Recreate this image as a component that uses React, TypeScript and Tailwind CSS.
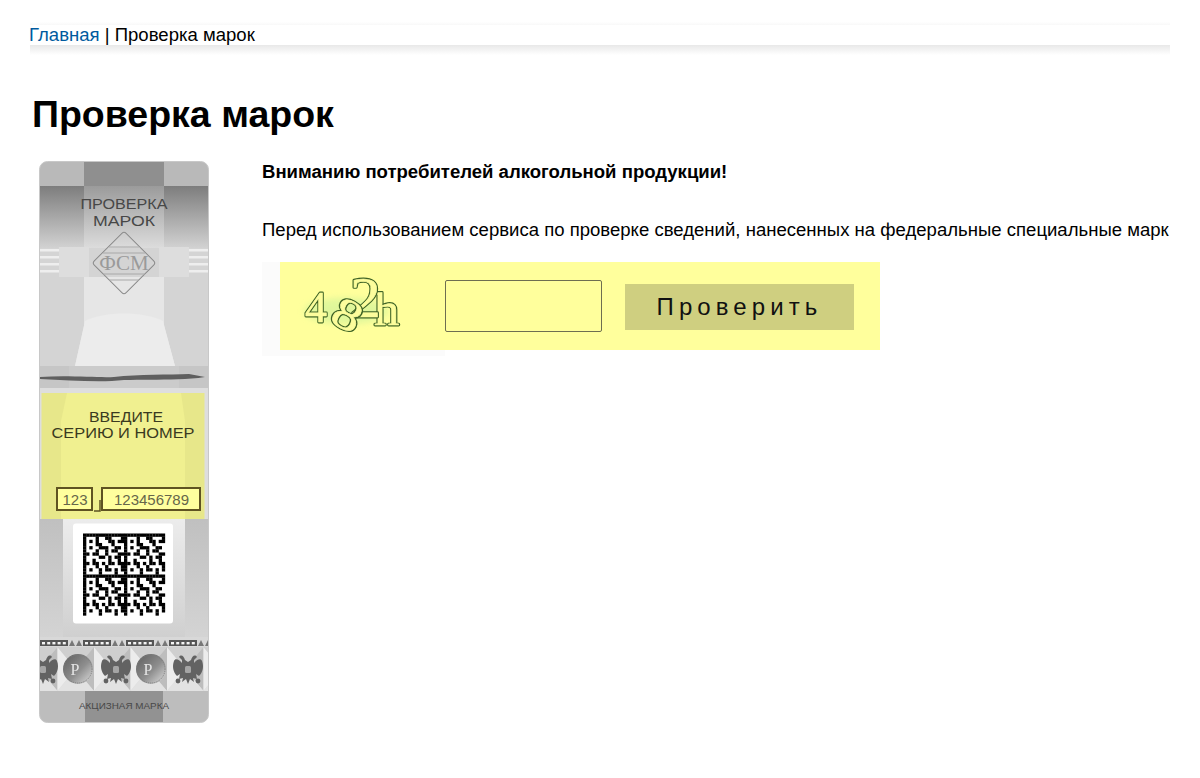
const SANS = '"Liberation Sans", Arial, sans-serif';

const quadrant = [
  "1111111111111",
  "1000100110001",
  "1010100011011",
  "1000110001000",
  "1010011100110",
  "1000100101100",
  "1101100100011",
  "1000011010110",
  "1001000010010",
  "1101101011011",
  "1000100100001",
  "1010010110101",
  "1000010000100",
];

function DataMatrix() {
  const c = 41 / 13;
  const cells: { x: number; y: number }[] = [];
  [0, 41].forEach((ox) =>
    [0, 41].forEach((oy) =>
      quadrant.forEach((row, r) =>
        row.split("").forEach((v, k) => {
          if (v === "1") cells.push({ x: 44 + ox + k * c, y: 372 + oy + r * c });
        })
      )
    )
  );
  return (
    <g>
      <rect x="34" y="362" width="100" height="100" rx="3" fill="#fff" />
      {cells.map((p, i) => (
        <rect key={i} x={p.x} y={p.y} width={c + 0.15} height={c + 0.15} fill="#000" />
      ))}
    </g>
  );
}

function Eagle({ cx }: { cx: number }) {
  return (
    <g transform={`translate(${cx} 508)`} fill="#626262">
      <path d="M-3 -9 C-4 -13 -7 -15 -9 -12 L-6 -9 L-6 -6 C-9 -10 -13 -11 -14 -8 C-16 -3 -15 3 -11 7 L-8 5 L-9 10 L-5 9 L-6 13 L-2 10 L0 15 L2 10 L6 13 L5 9 L9 10 L8 5 L11 7 C15 3 16 -3 14 -8 C13 -11 9 -10 6 -6 L6 -9 L9 -12 C7 -15 4 -13 3 -9 L0 -7 Z" />
      <rect x="-3" y="-3" width="6" height="7" rx="1.5" fill="#a5a5a5" />
      <circle cx="-10" cy="12" r="2.4" />
      <circle cx="10" cy="12" r="2.4" />
    </g>
  );
}

function Coin({ cx }: { cx: number }) {
  return (
    <g>
      <circle cx={cx} cy="508" r="15" fill="url(#coin)" />
      <circle cx={cx} cy="508" r="14" fill="none" stroke="#7c7c7c" strokeDasharray="1 1" strokeWidth="1" />
      <text x={cx - 3} y="514" textAnchor="middle" fontSize="16" fontFamily='"Liberation Serif", serif' fill="#e6e6e6">
        Р
      </text>
    </g>
  );
}

function Stamp() {
  const tiles = [-18, 18.5, 55, 91.5, 128, 164.5];
  const groups = [1, 44, 87, 130];
  return (
    <svg width="170" height="562" viewBox="0 0 170 562" className="block">
      <defs>
        <clipPath id="card">
          <rect x="0.5" y="0.5" width="169" height="561" rx="8" />
        </clipPath>
        <linearGradient id="sideTop" x1="0" x2="0" y1="0" y2="1">
          <stop offset="0" stopColor="#7d7d7d" />
          <stop offset="1" stopColor="#d2d2d2" />
        </linearGradient>
        <linearGradient id="midTop" x1="0" x2="0" y1="0" y2="1">
          <stop offset="0" stopColor="#9b9b9b" />
          <stop offset="1" stopColor="#dcdcdc" />
        </linearGradient>
        <linearGradient id="lowMid" x1="0" x2="0" y1="0" y2="1">
          <stop offset="0" stopColor="#ececec" />
          <stop offset="1" stopColor="#cfcfcf" />
        </linearGradient>
        <linearGradient id="lowSide" x1="0" x2="0" y1="0" y2="1">
          <stop offset="0" stopColor="#c0c0c0" />
          <stop offset="1" stopColor="#d4d4d4" />
        </linearGradient>
        <linearGradient id="coin" x1="0" x2="1" y1="0" y2="1">
          <stop offset="0" stopColor="#5c5c5c" />
          <stop offset="0.55" stopColor="#8e8e8e" />
          <stop offset="1" stopColor="#e2e2e2" />
        </linearGradient>
        <filter id="soft" x="-5%" y="-5%" width="110%" height="110%">
          <feGaussianBlur stdDeviation="0.5" />
        </filter>
        <filter id="softer" x="-5%" y="-5%" width="110%" height="110%">
          <feGaussianBlur stdDeviation="0.7" />
        </filter>
      </defs>
      <g clipPath="url(#card)">
        <g filter="url(#soft)">
          <rect width="170" height="562" fill="#d2d2d2" />
          <rect width="170" height="25" fill="#b9b9b9" />
          <rect x="45" width="80" height="25" fill="#8f8f8f" />
          <rect y="25" width="170" height="62" fill="url(#sideTop)" />
          <rect x="45" y="25" width="80" height="62" fill="url(#midTop)" />
          <rect y="87" width="170" height="120" fill="#d4d4d4" />
          <rect x="20" y="86" width="30" height="30" fill="#dddddd" />
          <rect x="120" y="86" width="30" height="30" fill="#dddddd" />
          {[88, 95, 102, 109].map((y) => (
            <g key={y}>
              <rect x="0" y={y} width="20" height="2.5" fill="#eeeeee" />
              <rect x="150" y={y} width="20" height="2.5" fill="#eeeeee" />
            </g>
          ))}
          <path d="M45 116 L125 116 L125 165 L136 205 L36 205 L45 165 Z" fill="#e6e6e6" />
          <path d="M46 160 C65 150 105 150 124 160 L136 205 L36 205 Z" fill="#ececec" />
          <rect y="205" width="170" height="22" fill="#c6c6c6" />
          <rect x="30" y="205" width="110" height="22" fill="#cbcbcb" />
          <path d="M1 216 C30 214 60 217 75 216 C100 213 130 214 150 213 L166 216 C140 220 110 218 85 219 C60 222 30 219 1 218 Z" fill="#5f5f5f" />
          <rect y="227" width="170" height="131" fill="#dedede" />

          <rect x="2.5" y="232" width="163" height="126" fill="#e7e78a" />
          <path d="M28 232 L142 232 L146 260 L146 358 L22 358 L22 260 Z" fill="#f0f090" />

          <rect y="358" width="170" height="120" fill="url(#lowSide)" />
          <rect x="24" y="358" width="122" height="120" fill="url(#lowMid)" />

          <rect y="478" width="170" height="52" fill="#dcdcdc" />
          {tiles.map((x) => (
            <g key={x}>
              <path d={`M${x} 486 L${x + 18} 508 L${x} 530 Z`} fill="#ececec" />
              <path d={`M${x} 486 L${x + 36.5} 486 L${x + 18} 508 Z`} fill="#cfcfcf" />
              <path d={`M${x + 36.5} 486 L${x + 36.5} 530 L${x + 18} 508 Z`} fill="#bdbdbd" />
              <path d={`M${x} 530 L${x + 36.5} 530 L${x + 18} 508 Z`} fill="#e2e2e2" />
            </g>
          ))}
          <rect y="476" width="170" height="10" fill="#d8d8d8" />
          {groups.map((x) => (
            <g key={x}>
              <rect x={x} y="479" width="28" height="6" fill="#555" />
              {[0, 1, 2, 3, 4].map((i) => (
                <rect key={i} x={x + 2 + i * 5.2} y="481" width="3" height="2.4" fill="#f4f4f4" />
              ))}
              <path d={`M${x + 29} 485 L${x + 32} 479 L${x + 35} 485 Z M${x + 36} 485 L${x + 39} 479 L${x + 42} 485 Z`} fill="#777" />
            </g>
          ))}
          <Eagle cx={4} />
          <Coin cx={39} />
          <Eagle cx={77} />
          <Coin cx={112} />
          <Eagle cx={149} />
          <rect y="530" width="170" height="32" fill="#bdbdbd" />
          <rect x="46" y="530" width="78" height="32" fill="#929292" />
        </g>
        <g filter="url(#softer)" transform="translate(0 0.5)">
          <DataMatrix />
        </g>

        <text x="85" y="47.5" textAnchor="middle" fontSize="14.8" fontFamily={SANS} fill="#474747" textLength="87" lengthAdjust="spacingAndGlyphs">
          ПРОВЕРКА
        </text>
        <text x="85" y="65" textAnchor="middle" fontSize="14.8" fontFamily={SANS} fill="#474747" textLength="62" lengthAdjust="spacingAndGlyphs">
          МАРОК
        </text>
        <g fill="none" stroke="#8a8a8a" strokeWidth="1" filter="url(#soft)">
          <rect x="62.5" y="79.5" width="45" height="45" rx="3" transform="rotate(45 85 102)" />
          <path d="M70 86 L100 86 M64 92 L106 92 M64 113 L106 113 M70 119 L100 119" stroke="#a8a8a8" />
        </g>
        <text x="85" y="109" textAnchor="middle" fontSize="21" fontFamily='"Liberation Serif", serif' fill="#9a9a9a">
          ФСМ
        </text>

        <text x="87" y="261" textAnchor="middle" fontSize="14.8" fontFamily={SANS} fill="#3a3a20" textLength="74" lengthAdjust="spacingAndGlyphs">
          ВВЕДИТЕ
        </text>
        <text x="84" y="277" textAnchor="middle" fontSize="14.8" fontFamily={SANS} fill="#3a3a20" textLength="143" lengthAdjust="spacingAndGlyphs">
          СЕРИЮ И НОМЕР
        </text>
        <g filter="url(#soft)">
          <rect x="18" y="327" width="35" height="22" fill="#ffff9e" stroke="#5e5220" strokeWidth="2" />
          <rect x="63" y="327" width="98" height="22" fill="#ffff9e" stroke="#5e5220" strokeWidth="2" />
          <path d="M55 350 L61 350 L61 339" fill="none" stroke="#5e5220" strokeWidth="1.5" />
        </g>
        <text x="36" y="343.5" textAnchor="middle" fontSize="15" fontFamily={SANS} fill="#66664a">
          123
        </text>
        <text x="112.5" y="343.5" textAnchor="middle" fontSize="15" fontFamily={SANS} fill="#66664a">
          123456789
        </text>
        <text x="85" y="548" textAnchor="middle" fontSize="9.5" fontFamily={SANS} fill="#484848" textLength="90" lengthAdjust="spacingAndGlyphs">
          АКЦИЗНАЯ МАРКА
        </text>
      </g>
      <rect x="0.5" y="0.5" width="169" height="561" rx="8" fill="none" stroke="#c8c8c8" />
    </svg>
  );
}

function Glyph({ ch, x, y, size, r = 0, sx = 1 }: { ch: string; x: number; y: number; size: number; r?: number; sx?: number }) {
  const props = {
    x: 0,
    y: 0,
    fontSize: size,
    fontFamily: '"Liberation Serif", serif',
  };
  return (
    <g transform={`translate(${x} ${y}) rotate(${r}) scale(${sx} 1)`}>
      <text {...props} fill="none" stroke="#3f6425" strokeWidth="2.8" strokeLinejoin="round">
        {ch}
      </text>
      <text {...props} fill="#fcfd9c" stroke="#fcfd9c" strokeWidth="0.6">
        {ch}
      </text>
    </g>
  );
}

function Captcha() {
  return (
    <svg width="120" height="88" viewBox="0 -9 120 88" className="shrink-0 block">
      <defs>
        <filter id="glow" x="-20%" y="-20%" width="140%" height="140%">
          <feGaussianBlur stdDeviation="3" />
        </filter>
        <filter id="inkSoft" x="-5%" y="-5%" width="110%" height="110%">
          <feGaussianBlur stdDeviation="0.3" />
        </filter>
      </defs>
      <ellipse cx="50" cy="40" rx="42" ry="13" fill="#d8f59a" filter="url(#glow)" opacity="0.8" />
      <g filter="url(#inkSoft)">
        <Glyph ch="4" x={9} y={51} size={44} />
        <Glyph ch="h" x={78} y={54} size={46} sx={1.1} />
        <Glyph ch="2" x={54} y={46} size={56} sx={1.1} />
        <Glyph ch="8" x={32} y={50} size={44} r={28} sx={1.3} />
      </g>
    </svg>
  );
}

export default function App() {
  return (
    <div className="min-h-[778px] bg-white text-black" style={{ fontFamily: SANS }}>
      <div className="px-[30px] pt-[22px]">
        <div className="h-[3px] bg-gradient-to-b from-white to-[#f8f8f8]" />
        <div className="-ml-[1px] h-[20px] text-[18.56px] leading-[20px] whitespace-nowrap">
          <a href="#" className="text-[#005a9e]">Главная</a> | Проверка марок
        </div>
        <div className="h-[10px] bg-gradient-to-b from-[#e8e8e8] to-white" />
      </div>

      <h1 className="ml-[32px] mt-[37px] text-[37.5px] leading-[44px] font-bold">Проверка марок</h1>

      <div className="mt-[25px] flex items-start">
        <div className="ml-[39px] shrink-0">
          <Stamp />
        </div>
        <div className="ml-[53px] w-[906px] pt-[1px]">
          <p className="text-[18.56px] leading-[20px] font-bold whitespace-nowrap">
            Вниманию потребителей алкогольной продукции!
          </p>
          <p className="mt-[38px] text-[18.56px] leading-[20px] whitespace-nowrap">
            Перед использованием сервиса по проверке сведений, нанесенных на федеральные специальные марк
          </p>
          <div className="relative mt-[22px] h-[94px]">
            <div className="absolute left-0 top-0 h-[94px] w-[183px] bg-[#fbfbfb]" />
            <div className="relative ml-[18px] flex h-[88px] w-[600px] items-center bg-[#ffff9c]">
              <div className="ml-[16px]">
                <Captcha />
              </div>
              <input
                type="text"
                className="ml-[29px] h-[52px] w-[157px] rounded-[2px] border border-[#6e6e50] bg-[#ffff9c]"
              />
              <button
                type="button"
                className="ml-[23px] mt-[1px] h-[46px] w-[229px] bg-[#cfcf80] text-center text-[24px] tracking-[5.1px] text-[#111]"
              >
                Проверить
              </button>
            </div>
          </div>
        </div>
      </div>
    </div>
  );
}
